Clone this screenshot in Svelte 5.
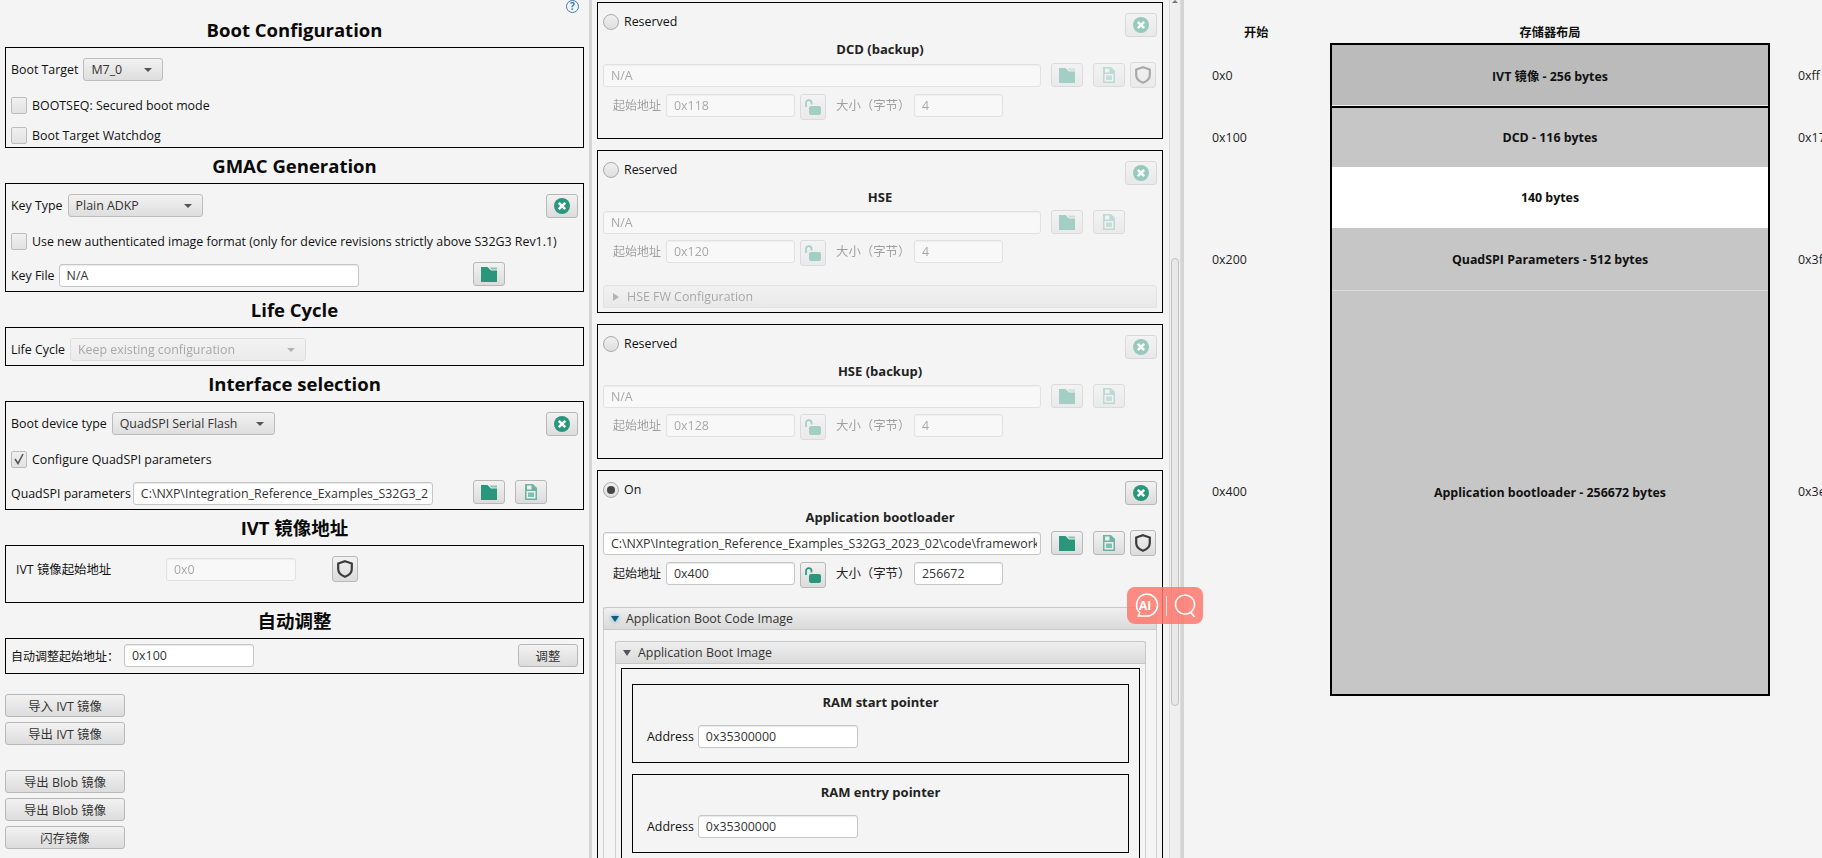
<script>
  const slots = [
    { id: 'dcd', state: 'Reserved', title: 'DCD (backup)', file: 'N/A', addr: '0x118', size: '4', shield: true, h: 137 },
    { id: 'hse', state: 'Reserved', title: 'HSE', file: 'N/A', addr: '0x120', size: '4', shield: false, h: 163, fw: true },
    { id: 'hseb', state: 'Reserved', title: 'HSE (backup)', file: 'N/A', addr: '0x128', size: '4', shield: false, h: 135 }
  ]

  const memory = [
    { label: 'IVT 镜像 - 256 bytes', cls: 'ivt', start: '0x0', end: '0xff', h: 61 },
    { label: 'DCD - 116 bytes', cls: 'used', start: '0x100', end: '0x173', h: 59 },
    { label: '140 bytes', cls: 'free', start: '', end: '', h: 61 },
    { label: 'QuadSPI Parameters - 512 bytes', cls: 'used line', start: '0x200', end: '0x3ff', h: 62 },
    { label: 'Application bootloader - 256672 bytes', cls: 'used', start: '0x400', end: '0x3ee9f', h: 403 }
  ]
</script>

{#snippet closeIcon()}
  <svg width="16" height="16" viewBox="0 0 16 16"><circle cx="8" cy="8" r="8" fill="#2a977c" /><path d="M4.800 4.800l6.400 6.400M11.200 4.800l-6.400 6.400" stroke="#fff" stroke-width="2.600" /></svg>
{/snippet}

{#snippet folderIcon()}
  <svg width="16" height="15" viewBox="0 0 16 15"><path d="M0 0H6.500L10 3.500H16V15H0Z" fill="#2a977c" /><path d="M8.500 0.500H16V2.500H10.500Z" fill="#2a977c" opacity=".5" /></svg>
{/snippet}

{#snippet docIcon()}
  <svg width="12" height="16" viewBox="0 0 12 16"><path d="M0 0H8L12 4V16H0Z" fill="#2a977c" opacity=".65" /><rect x="2" y="1.500" width="4.500" height="4" fill="#eee" /><rect x="1.500" y="7" width="9" height="7.500" fill="#eee" /><rect x="3" y="8.500" width="6" height="4.500" fill="#2a977c" opacity=".55" /></svg>
{/snippet}

{#snippet shieldIcon()}
  <svg width="16" height="18" viewBox="0 0 16 18"><path d="M8 1.200L14.800 3.500V9C14.800 13 11.500 15.500 8 16.800C4.500 15.500 1.200 13 1.200 9V3.500Z" fill="none" stroke="#3c3c3c" stroke-width="2.200" /></svg>
{/snippet}

{#snippet lockIcon()}
  <svg width="16" height="16" viewBox="0 0 16 16"><path d="M1 8V4C1 .2 6.500 .2 6.500 4V5.500" fill="none" stroke="#2a977c" stroke-width="1.700" /><rect x="4" y="7" width="12" height="9" rx="2" fill="#2a977c" /></svg>
{/snippet}

{#snippet slot(title, state, file, addr, size, shield, on)}
  <div class="head-row">
    <span class="radio" class:on></span>
    <span class="radio-text">{state}</span>
    <button class="btn icon close-btn">{@render closeIcon()}</button>
  </div>
  <h4>{title}</h4>
  <div class="file-row">
    <span class="field wide">{file}</span>
    <button class="btn icon">{@render folderIcon()}</button>
    <button class="btn icon doc">{@render docIcon()}</button>
    {#if shield}
      <button class="btn icon shield">{@render shieldIcon()}</button>
    {/if}
  </div>
  <div class="addr-row">
    <span class="addr-label">起始地址</span>
    <span class="field addr">{addr}</span>
    <button class="btn icon lock">{@render lockIcon()}</button>
    <span class="size-label">大小（字节）</span>
    <span class="field size">{size}</span>
  </div>
{/snippet}

<div class="page">
  <aside class="left">
    <span class="help">?</span>
    <h3 class="first">Boot Configuration</h3>
    <section class="group g1">
      <div class="row first-row"><span>Boot Target</span><span class="combo c-target">M7_0</span></div>
      <label class="check c1"><span class="box"></span>BOOTSEQ: Secured boot mode</label>
      <label class="check c2"><span class="box"></span>Boot Target Watchdog</label>
    </section>

    <h3>GMAC Generation</h3>
    <section class="group g2">
      <div class="row first-row">
        <span>Key Type</span><span class="combo c-key">Plain ADKP</span>
        <button class="btn icon end">{@render closeIcon()}</button>
      </div>
      <label class="check c3"><span class="box"></span>Use new authenticated image format (only for device revisions strictly above S32G3 Rev1.1)</label>
      <div class="row file">
        <span>Key File</span><span class="field f-key">N/A</span>
        <button class="btn icon b-folder">{@render folderIcon()}</button>
      </div>
    </section>

    <h3 class="tight">Life Cycle</h3>
    <section class="group g3">
      <div class="row first-row">
        <span>Life Cycle</span><span class="combo c-life disabled">Keep existing configuration</span>
      </div>
    </section>

    <h3>Interface selection</h3>
    <section class="group g2">
      <div class="row first-row">
        <span>Boot device type</span><span class="combo c-boot">QuadSPI Serial Flash</span>
        <button class="btn icon end">{@render closeIcon()}</button>
      </div>
      <label class="check c3"><span class="box checked">
        <svg width="12" height="12" viewBox="0 0 12 12"><path d="M2 6l3 4.500L10 1" fill="none" stroke="#555" stroke-width="1.600" /></svg>
      </span>Configure QuadSPI parameters</label>
      <div class="row file">
        <span>QuadSPI parameters</span><span class="field f-quad">C:\NXP\Integration_Reference_Examples_S32G3_2</span>
        <button class="btn icon b-folder">{@render folderIcon()}</button>
        <button class="btn icon b-doc">{@render docIcon()}</button>
      </div>
    </section>

    <h3>IVT 镜像地址</h3>
    <section class="group g4">
      <div class="row ivt-row">
        <span class="ivt-label">IVT 镜像起始地址</span>
        <span class="field f-ivt disabled">0x0</span>
        <button class="btn icon b-shield">{@render shieldIcon()}</button>
      </div>
    </section>

    <h3>自动调整</h3>
    <section class="group g5">
      <div class="row auto-row">
        <span class="auto-label">自动调整起始地址：</span>
        <span class="field f-auto">0x100</span>
        <button class="btn adjust">调整</button>
      </div>
    </section>

    <div class="actions">
      <button class="btn act">导入 IVT 镜像</button>
      <button class="btn act">导出 IVT 镜像</button>
      <button class="btn act gap">导出 Blob 镜像</button>
      <button class="btn act">导出 Blob 镜像</button>
      <button class="btn act">闪存镜像</button>
    </div>
  </aside>

  <main class="middle">
    {#each slots as s}
      <section class="slot disabled-slot" style="height: {s.h}px">
        {@render slot(s.title, s.state, s.file, s.addr, s.size, s.shield, false)}
        {#if s.fw}
          <div class="pane closed"><span class="arrow side"></span>HSE FW Configuration</div>
        {/if}
      </section>
    {/each}

    <section class="slot last">
      {@render slot('Application bootloader', 'On', 'C:\\NXP\\Integration_Reference_Examples_S32G3_2023_02\\code\\framework\\', '0x400', '256672', true, true)}
      <div class="outer-pane">
        <div class="pane"><span class="arrow focus"></span>Application Boot Code Image</div>
        <div class="inner-pane">
          <div class="pane"><span class="arrow"></span>Application Boot Image</div>
          <div class="image-box">
            <div class="ram"><h4>RAM start pointer</h4><div class="ram-row"><span>Address</span><span class="field f-ram">0x35300000</span></div></div>
            <div class="ram"><h4>RAM entry pointer</h4><div class="ram-row"><span>Address</span><span class="field f-ram">0x35300000</span></div></div>
          </div>
        </div>
      </div>
    </section>
  </main>

  <div class="scroll">
    <span class="scroll-up"></span>
    <span class="thumb"></span>
  </div>

  <aside class="right">
    <div class="col-head"><span class="h-start">开始</span><span class="h-map">存储器布局</span></div>
    <div class="map-wrap">
      <div class="starts">
        {#each memory as m}
          <div class="addr-cell" style="height: {m.h}px">{m.start}</div>
        {/each}
      </div>
      <div class="map">
        {#each memory as m}
          <div class="cell {m.cls}" style="height: {m.h}px">{m.label}</div>
        {/each}
      </div>
      <div class="ends">
        {#each memory as m}
          <div class="addr-cell" style="height: {m.h}px">{m.end}</div>
        {/each}
      </div>
    </div>
  </aside>

  <div class="float">
    <svg width="26" height="27" viewBox="0 0 26 27"><path d="M13 1.500A11.500 11.500 0 1 1 13 24.500H4.500L6 21A11.500 11.500 0 0 1 13 1.500Z" fill="none" stroke="#fff" stroke-width="1.600" /></svg>
    <span class="ai">AI</span>
    <span class="float-sep"></span>
    <svg width="24" height="26" viewBox="0 0 24 26"><circle cx="11.500" cy="11.500" r="10" fill="none" stroke="#fff" stroke-width="1.600" /><path d="M17.500 19.500l4 5" stroke="#fff" stroke-width="1.800" /></svg>
  </div>
</div>

<style>
  :global(body) {
    margin: 0;
    background: #f4f4f4;
  }

  .page {
    position: relative;
    display: flex;
    width: 1822px;
    height: 858px;
    overflow: hidden;
    background: #f4f4f4;
    color: #222;
    font-family: "Open Sans", "Noto Sans CJK SC", sans-serif;
    font-size: 12.400px;
  }

  /* left panel */
  .left {
    position: relative;
    box-sizing: border-box;
    width: 592px;
    flex: none;
    padding: 0 5px;
    border-right: 3px solid #d4d4d4;
    color: #111;
  }

  .help {
    position: absolute;
    top: 0;
    left: 566px;
    width: 11px;
    height: 11px;
    border: 1.500px solid #3b7fb8;
    border-radius: 50%;
    color: #3b7fb8;
    font-size: 10px;
    font-weight: 700;
    line-height: 11px;
    text-align: center;
  }

  h3 {
    margin: 0;
    height: 35px;
    line-height: 36px;
    font-size: 18.500px;
    font-weight: 700;
    text-align: center;
    color: #0a0a0a;
  }

  h3.first {
    margin-top: 12px;
  }

  h3.tight {
    height: 35px;
  }

  .group {
    box-sizing: border-box;
    border: 1px solid #000;
    padding: 0 5px;
  }

  .g1 { height: 101px; padding-top: 10px; }
  .g2 { height: 109px; padding-top: 10px; }
  .g3 { height: 39px; padding-top: 10px; }
  .g4 { height: 58px; padding-top: 10px; }
  .g5 { height: 36px; padding-top: 5px; }

  .row {
    display: flex;
    align-items: center;
    gap: 5px;
  }

  .first-row {
    height: 23px;
  }

  .combo {
    position: relative;
    box-sizing: border-box;
    display: block;
    height: 23px;
    padding-left: 7px;
    line-height: 21px;
    border: 1px solid #bcbcbc;
    border-radius: 3px;
    background: linear-gradient(#f2f2f2, #dedede);
    color: #333;
  }

  .combo::after {
    content: '';
    position: absolute;
    top: 9px;
    right: 10px;
    border: 4px solid transparent;
    border-top: 4px solid #555;
    border-bottom: 0;
  }

  .c-target { width: 80px; }
  .c-key { width: 135px; }
  .c-life { width: 236px; }
  .c-boot { width: 163px; }

  .disabled {
    opacity: .4;
  }

  .check {
    display: flex;
    align-items: center;
    gap: 5px;
    height: 16px;
  }

  .c1 { margin-top: 16px; }
  .c2 { margin-top: 14px; }
  .c3 { margin-top: 16px; }

  .box {
    box-sizing: border-box;
    display: flex;
    align-items: center;
    justify-content: center;
    width: 16px;
    height: 17px;
    border: 1px solid #bcbcbc;
    border-radius: 2px;
    background: linear-gradient(#f0f0f0, #e2e2e2);
  }

  .field {
    box-sizing: border-box;
    display: block;
    height: 23px;
    padding: 0 7px;
    overflow: clip;
    overflow-clip-margin: content-box;
    line-height: 21px;
    white-space: nowrap;
    border: 1px solid #c6c6c6;
    border-radius: 3px;
    background: #fff;
    color: #333;
    box-shadow: inset 0 1px 1px #e8e8e8;
  }

  .file {
    margin-top: 14px;
    gap: 4px;
  }

  .f-key { width: 300px; }
  .f-quad { width: 300px; margin-left: -2px; padding-right: 3px; }
  .f-ivt { width: 130px; margin-left: 45px; }
  .f-auto { width: 130px; margin-left: 2px; }
  .f-ram { width: 160px; }

  .btn {
    box-sizing: border-box;
    display: flex;
    align-items: center;
    justify-content: center;
    margin: 0;
    padding: 0;
    border: 1px solid #b8b8b8;
    border-radius: 3px;
    background: linear-gradient(#f2f2f2, #dcdcdc);
    color: #333;
    font: inherit;
  }

  .icon {
    flex: none;
    width: 32px;
    height: 24px;
  }

  .btn.end {
    margin-left: auto;
  }

  .btn.b-folder {
    position: relative;
    top: -1px;
    margin-left: 110px;
  }

  .file:has(.b-doc) .btn.b-folder {
    margin-left: 36px;
  }

  .btn.b-doc {
    position: relative;
    top: -1px;
    margin-left: 6px;
  }

  .ivt-row {
    padding-left: 5px;
  }

  .ivt-label {
    width: 100px;
    flex: none;
  }

  .btn.b-shield {
    width: 26px;
    height: 26px;
    margin-left: 31px;
  }

  .btn.adjust {
    width: 60px;
    height: 23px;
    margin-left: auto;
  }

  .auto-label {
    width: 106px;
    flex: none;
    font-size: 12px;
    white-space: nowrap;
  }

  .actions {
    display: flex;
    flex-direction: column;
    gap: 5px;
    margin-top: 20px;
  }

  .act {
    width: 120px;
    height: 23px;
  }

  .btn.gap {
    margin-top: 20px;
  }

  /* middle panel */
  .middle {
    box-sizing: border-box;
    width: 577px;
    flex: none;
    padding: 2px 0 0 5px;
    display: flex;
    flex-direction: column;
    gap: 11px;
    overflow: hidden;
  }

  .slot {
    box-sizing: border-box;
    flex: none;
    width: 566px;
    padding: 10px 5px 0;
    border: 1px solid #000;
  }

  .disabled-slot > * {
    opacity: .4;
  }

  .disabled-slot h4 {
    opacity: 1;
  }

  .last {
    flex: 1;
  }

  .head-row {
    display: flex;
    align-items: flex-start;
    height: 24px;
  }

  .radio {
    box-sizing: border-box;
    display: flex;
    align-items: center;
    justify-content: center;
    width: 16px;
    height: 16px;
    margin-top: 1px;
    border: 1px solid #aaa;
    border-radius: 50%;
    background: linear-gradient(#f0f0f0, #dedede);
  }

  .radio.on::after {
    content: '';
    width: 8px;
    height: 8px;
    border-radius: 50%;
    background: #444;
  }

  .radio-text {
    margin: 0 auto 0 5px;
    line-height: 18px;
    color: #111;
  }

  .disabled-slot .head-row {
    opacity: 1;
  }

  .disabled-slot .close-btn {
    opacity: .45;
  }

  h4 {
    margin: 0;
    padding-top: 2px;
    height: 21px;
    line-height: 21px;
    font-size: 13px;
    font-weight: 700;
    text-align: center;
    color: #222;
  }

  .file-row {
    display: flex;
    align-items: center;
    margin-top: 2px;
  }

  .wide {
    flex: none;
    width: 438px;
    margin-right: 10px;
    padding-right: 3px;
  }

  .btn.doc {
    margin-left: 10px;
  }

  .btn.shield {
    width: 26px;
    height: 26px;
    margin-left: 5px;
  }

  .addr-row {
    display: flex;
    align-items: flex-start;
    margin-top: 6px;
  }

  .addr-label {
    width: 53px;
    margin-left: 10px;
    flex: none;
    font-size: 12px;
    line-height: 23px;
    color: #222;
  }

  .addr {
    width: 129px;
  }

  .btn.lock {
    width: 26px;
    height: 26px;
    margin: 0 10px 0 5px;
  }

  .size-label {
    width: 78px;
    flex: none;
    line-height: 23px;
  }

  .size {
    width: 89px;
  }

  .pane {
    box-sizing: border-box;
    display: flex;
    align-items: center;
    gap: 7px;
    height: 23px;
    padding-left: 7px;
    border: 1px solid #c8c8c8;
    border-radius: 3px 3px 0 0;
    background: linear-gradient(#efefef, #dadada);
    color: #333;
  }

  .closed {
    margin-top: 19px;
  }

  .arrow {
    width: 0;
    height: 0;
    border: 4.500px solid transparent;
    border-top: 6px solid #555;
    border-bottom: 0;
  }

  .arrow.side {
    margin: 0 1px 0 2px;
    border: 4px solid transparent;
    border-left: 6px solid #555;
    border-right: 0;
  }

  .arrow.focus {
    border-top-color: #165a78;
    filter: drop-shadow(0 0 2px #39a7dc);
  }

  .outer-pane {
    margin-top: 19px;
    min-height: 260px;
    border-right: 1px solid #d0d0d0;
    border-left: 1px solid #d0d0d0;
    width: 554px;
    box-sizing: border-box;
  }

  .outer-pane > .pane {
    margin: 0 -1px;
  }

  .inner-pane {
    margin: 11px 10px 0 11px;
    border-right: 1px solid #d0d0d0;
    border-left: 1px solid #d0d0d0;
  }

  .inner-pane > .pane {
    margin: 0 -1px;
  }

  .image-box {
    margin: 4px 5px 0;
    padding: 15px 10px 0;
    height: 300px;
    border: 1px solid #000;
  }

  .ram {
    box-sizing: border-box;
    height: 79px;
    margin-bottom: 11px;
    padding-top: 5px;
    border: 1px solid #000;
  }

  .ram-row {
    display: flex;
    align-items: center;
    gap: 4px;
    margin-top: 12px;
    padding-left: 14px;
    color: #111;
  }

  /* scroll bar */
  .scroll {
    position: relative;
    box-sizing: border-box;
    width: 12px;
    flex: none;
    border-left: 1px solid #dcdcdc;
    border-right: 1px solid #dcdcdc;
    background: #efefef;
  }

  .scroll-up {
    position: absolute;
    top: 0;
    left: 2px;
    border: 3px solid transparent;
    border-bottom: 3px solid #777;
    border-top: 0;
  }

  .thumb {
    position: absolute;
    top: 258px;
    left: 1px;
    box-sizing: border-box;
    width: 8px;
    height: 448px;
    border: 1px solid #c2c2c2;
    border-radius: 4px;
    background: #e8e8e8;
  }

  /* right panel */
  .right {
    box-sizing: border-box;
    width: 641px;
    flex: none;
    border-left: 3px solid #d4d4d4;
    overflow: hidden;
  }

  .col-head {
    display: flex;
    height: 43px;
    align-items: flex-start;
    padding-top: 23px;
    box-sizing: border-box;
    font-size: 12.200px;
    font-weight: 700;
    color: #111;
  }

  .h-start {
    width: 146px;
    padding-left: 60px;
    box-sizing: border-box;
  }

  .h-map {
    width: 440px;
    text-align: center;
  }

  .map-wrap {
    display: flex;
  }

  .starts {
    width: 146px;
    flex: none;
    padding-left: 28px;
    box-sizing: border-box;
  }

  .ends {
    width: 60px;
    flex: none;
    padding-left: 28px;
    box-sizing: border-box;
    white-space: nowrap;
  }

  .addr-cell {
    display: flex;
    align-items: center;
    color: #222;
  }

  .addr-cell:first-child {
    padding: 2px 0;
  }

  .map {
    box-sizing: border-box;
    width: 440px;
    flex: none;
    border: 2px solid #000;
  }

  .cell {
    display: flex;
    align-items: center;
    justify-content: center;
    font-weight: 700;
    color: #111;
  }

  .ivt {
    background: #bbb;
    border-bottom: 2px solid #000;
    box-shadow: inset 0 -1px 0 #eee;
  }

  .used {
    background: #c6c6c6;
  }

  .free {
    background: #fff;
  }

  .line {
    border-bottom: 1px solid #dcdcdc;
  }

  /* floating widget */
  .float {
    position: absolute;
    top: 587px;
    left: 1127px;
    display: flex;
    align-items: center;
    box-sizing: border-box;
    width: 76px;
    height: 37px;
    padding: 0 6px 0 7px;
    border-radius: 8px;
    background: rgba(255, 120, 108, .85);
    color: #fff;
  }

  .ai {
    position: absolute;
    left: 12px;
    font-size: 12px;
    font-weight: 700;
  }

  .float-sep {
    width: 1px;
    height: 20px;
    margin: 0 7px;
    background: rgba(255, 255, 255, .7);
  }
</style>
